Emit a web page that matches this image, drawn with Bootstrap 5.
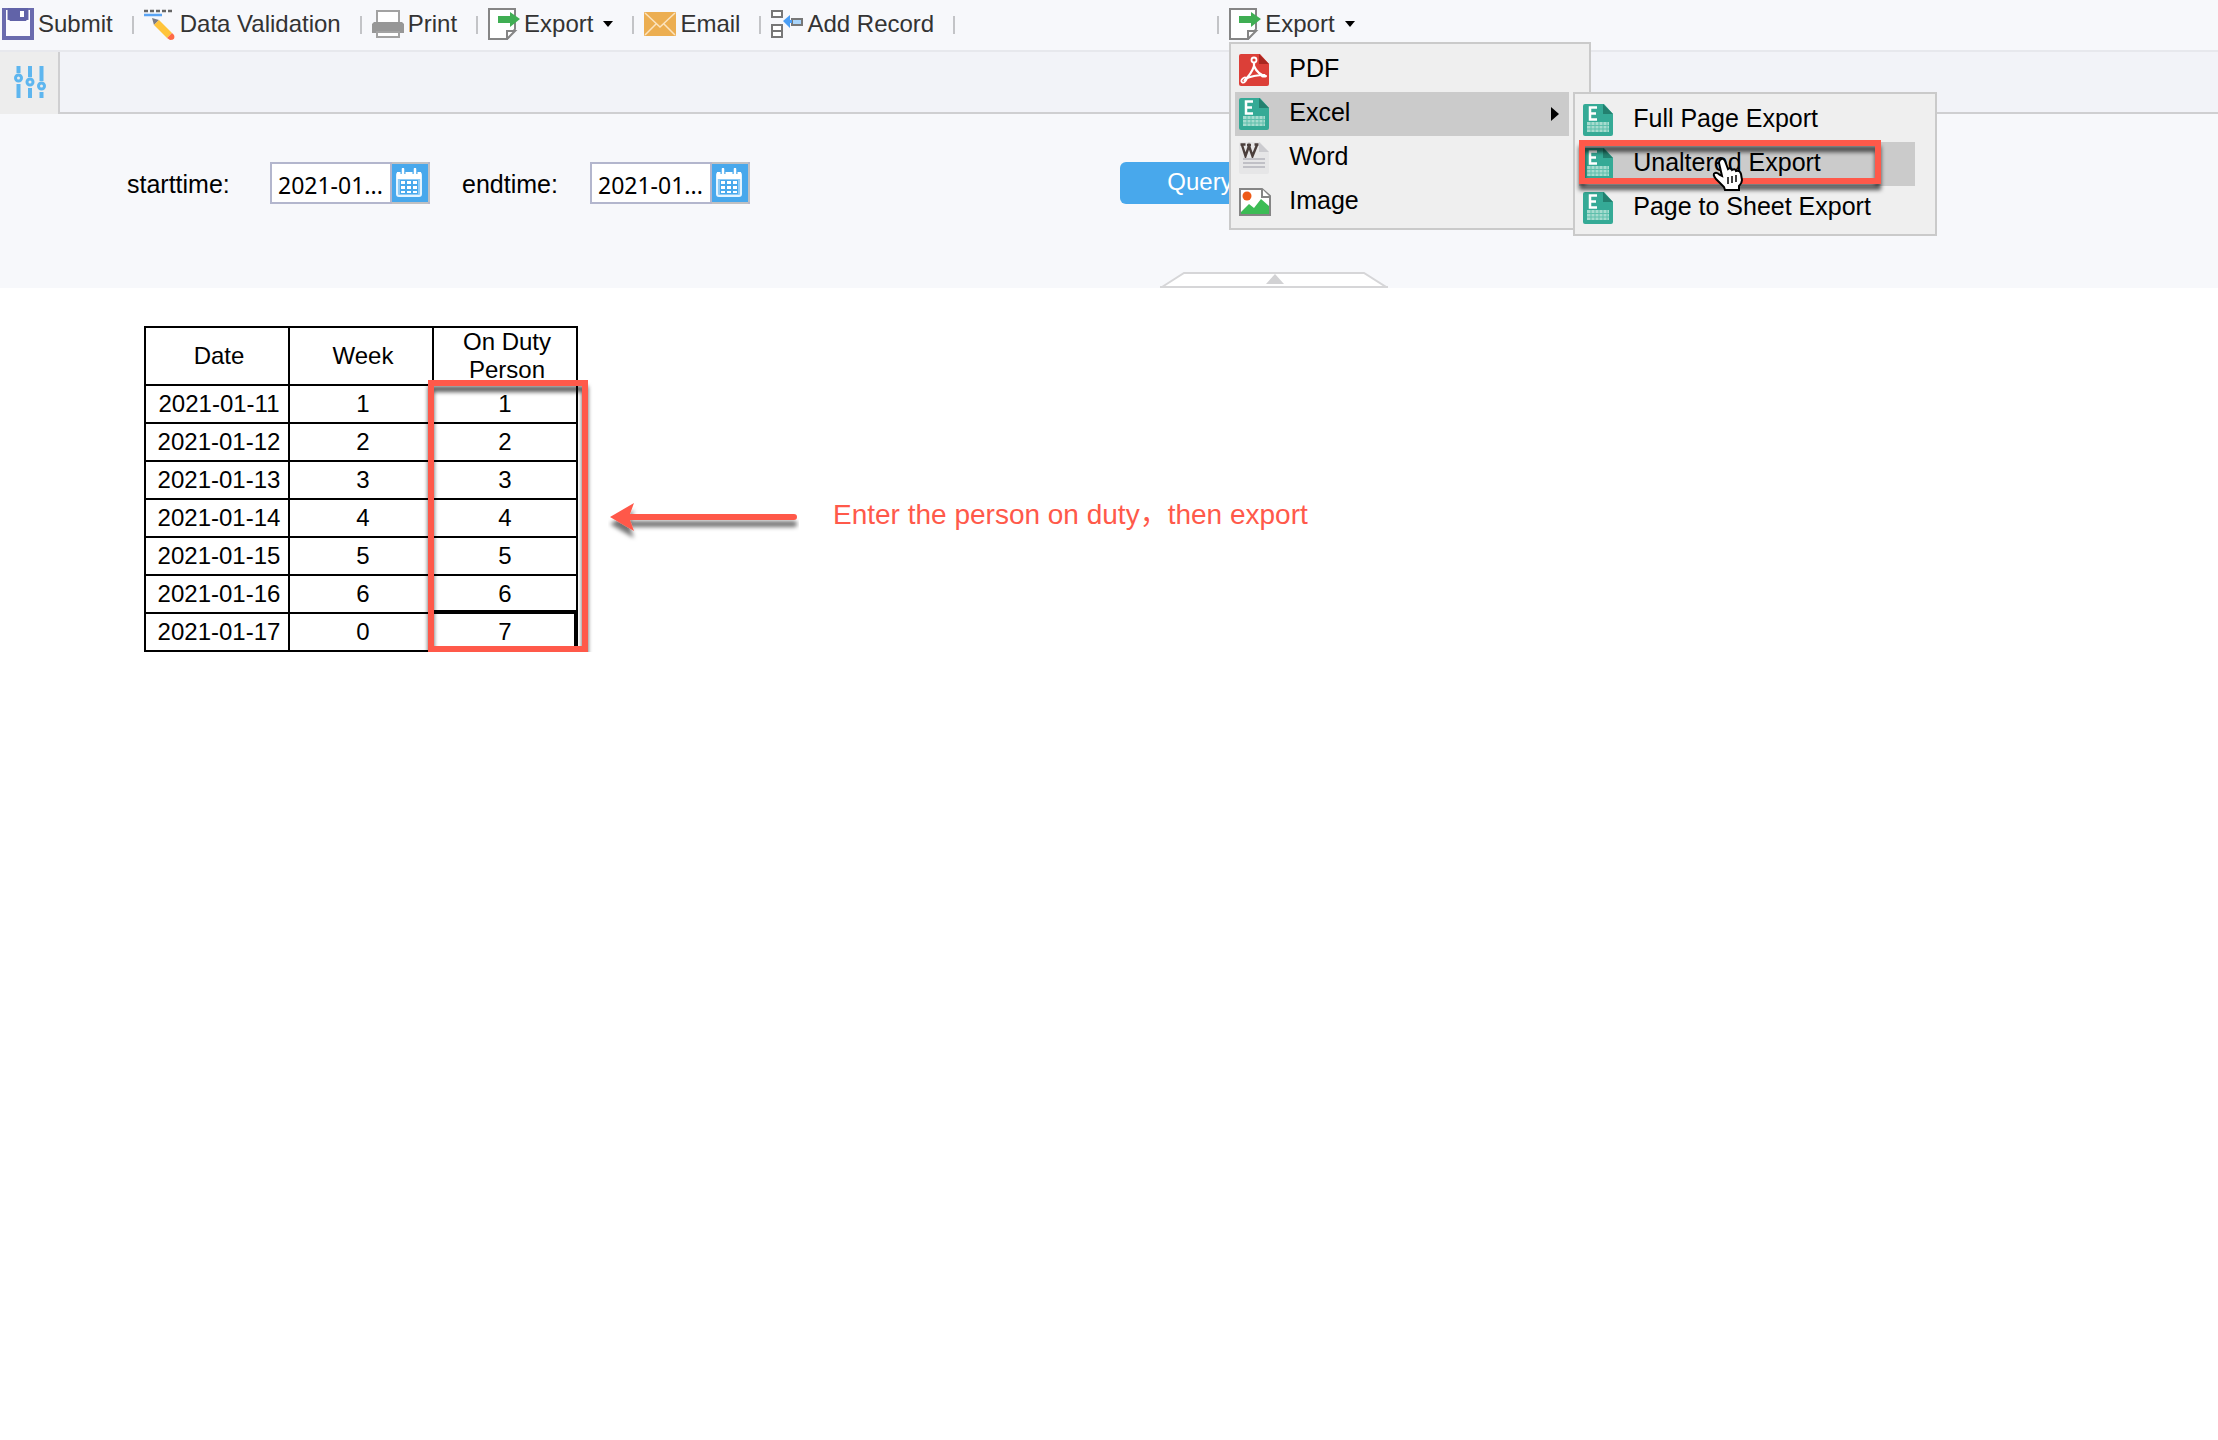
<!DOCTYPE html>
<html lang="en">
<head>
<meta charset="utf-8">
<meta name="viewport" content="width=device-width, initial-scale=1">
<title>Duty Report</title>
<link href="https://cdn.jsdelivr.net/npm/bootstrap@5.3.0/dist/css/bootstrap.min.css" rel="stylesheet">
<style>
  body { font-family: "Liberation Sans", Arial, sans-serif; font-size: 24px; line-height: 28px; color: #000; background: #fff; }
  svg { display: block; flex: none; }
  .toolbar { height: 52px; padding-left: 2px; background: #f7f8fb; border-bottom: 2px solid #e7e8ed; }
  .tool-btn { display: flex; align-items: center; gap: 4px; padding: 0; border: 0; background: none; color: #333; white-space: nowrap; height: 44px; margin-bottom: 2px; }
  .tool-sep { width: 2px; height: 18px; background: #c3c4c7; margin: 0 10px 0 19px; flex: none; }
  .tool-gap { width: 233px; flex: none; }
  .caret { border: 5px solid transparent; border-top: 6px solid #000; border-bottom: 0; margin-left: 6px; }
  .tab-strip { height: 62px; background: #f2f3f8; }
  .param-toggle { width: 60px; border: 0; border-right: 2px solid #cfcfd1; background: #ededed; padding: 14px 0 0 14px; display: flex; align-items: flex-start; }
  .tab-line { border-bottom: 2px solid #cfcfd1; }
  .param-panel { height: 174px; background: #f7f8fb; padding: 48px 0 0 127px; }
  .param-panel label { font-size: 25px; flex: none; padding-top: 2px; }
  .start-label { width: 143px; }
  .end-label { width: 128px; margin-left: 32px; }
  .date-box { width: 160px; height: 42px; border: 2px solid #b3b6cd; background: #fff; flex: none; }
  .date-box input { width: 120px; border: 0; padding: 4px 0 0 6px; font-family: "Noto Sans", sans-serif; font-size: 23px; line-height: 30px; color: #000; background: none; border-right: 2px solid #b3b6cd; outline: 0; }
  .date-box button { flex: 1; border: 0; padding: 0 0 0 3px; background: #48a8ec; box-shadow: 0 -2px #c0c0c2, 0 2px #c0c0c2, 2px 0 #c0c0c2; }
  .query-btn { width: 160px; height: 42px; margin-left: 370px; border: 0; border-radius: 6px; background: #48a8ec; color: #fff; padding: 0 0 2px; flex: none; }
  .collapse-tab { bottom: 0; left: 1160px; border: 0; padding: 0; background: none; }
  .drop-box { background: #efefef; border: 2px solid #cacaca; padding: 4px 20px 4px 4px; font-size: 25px; position: absolute; z-index: 5; }
  .export-menu { left: 0; top: 40px; width: 362px; }
  .sub-menu { left: 342px; top: 48px; width: 364px; }
  .drop-box button { display: flex; align-items: center; width: 100%; height: 44px; border: 0; padding: 0 10px 0 4px; background: none; white-space: nowrap; color: #000; }
  .drop-box .hot { background: #cbcbcb; }
  .drop-box button svg:first-child { width: 32px; height: 32px; }
  .drop-box button span { margin: 0 auto 4px 18px; }
  .red-frame { position: absolute; border: 6px solid #ff594a; filter: drop-shadow(0 6px 2px rgba(0,0,0,.65)); pointer-events: none; }
  .frame-menu { left: 4px; top: 46px; width: 302px; height: 44px; }
  .hand { position: absolute; left: 137px; top: 63px; }
  .report { padding: 38px 0 0 144px; }
  .duty-table { width: 434px; table-layout: fixed; border-collapse: collapse; text-align: center; }
  .duty-table th, .duty-table td { border: 2px solid #000; height: 38px; padding: 0 0 0 4px; font-weight: 400; }
  .duty-table td:last-child { padding-left: 0; }
  .duty-table th { height: 58px; }
  .active-cell::after { content: ""; position: absolute; right: 0; bottom: 0; width: 148px; height: 42px; border: 4px solid #000; }
  .frame-col { left: 284px; top: 54px; width: 160px; height: 272px; }
  .arrow { margin: 176px 34px 0 30px; }
  .note { margin-top: 173px; font-family: "Liberation Sans", "Noto Sans CJK SC", sans-serif; font-size: 28px; line-height: 32px; color: #ff594a; white-space: nowrap; }
</style>
<script src="https://cdn.jsdelivr.net/npm/bootstrap@5.3.0/dist/js/bootstrap.bundle.min.js"></script>
</head>
<body>
<svg width="0" height="0" class="position-absolute" aria-hidden="true">
  <defs>
    <symbol id="i-export" viewBox="0 0 32 32">
      <path d="M1 1h26v20l-8 10H1z" fill="#fff" stroke="#858585" stroke-width="2"/>
      <path d="M19 31v-8h8z" fill="#fff" stroke="#858585" stroke-width="2"/>
      <path d="M10 8h12V4l10 7-10 8v-4H10z" fill="#3fae53"/>
    </symbol>
    <symbol id="i-excel" viewBox="0 0 32 32">
      <path d="M0 2q0-2 2-2h19l9 10v20q0 2-2 2H2q-2 0-2-2z" fill="#35aa96"/>
      <path d="M20 0l10 10H20z" fill="#23806f"/>
      <path d="M14 3.500H7v12h7M7 9.500h6" fill="none" stroke="#fff" stroke-width="2.500"/>
      <path d="M4 18h22v10H4z" fill="#a6dccf"/>
      <path d="M4 21.500h22M4 25h22M8 18v10M12 18v10M16 18v10M20 18v10M24 18v10" stroke="#5fbfac"/>
    </symbol>
    <symbol id="i-cal" viewBox="0 0 28 30">
      <rect x="2" y="5" width="24" height="23" rx="2" fill="#8ecbf6" stroke="#e4f4ff" stroke-width="2"/>
      <path d="M2 4h24v7H2z" fill="#fff"/>
      <path d="M5 12h18v14H5z" fill="#48a8ec"/>
      <path d="M6 13h4v3H6zM12 13h4v3h-4zM18 13h4v3h-4zM6 18h4v3H6zM12 18h4v3h-4zM18 18h4v3h-4zM6 23h4v2H6zM12 23h4v2h-4zM18 23h4v2h-4z" fill="#fff"/>
      <path d="M8 1v5M20 1v5" stroke="#48a8ec" stroke-width="5"/>
      <path d="M8 1v5M20 1v5" stroke="#fff" stroke-width="2.500" stroke-linecap="round"/>
    </symbol>
  </defs>
</svg>

<header class="toolbar d-flex align-items-center">
  <button class="tool-btn" type="button">
    <svg width="32" height="32" viewBox="0 0 32 32"><path d="M0 0h32v32H0z" fill="#6a6bae"/><path d="M4 12h24v16H4z" fill="#fbfbff"/><path d="M4 2h1.500v12H4zM26.500 2H28v12h-1.500z" fill="#fff"/><path d="M6 0h20v10l-2 3H8l-2-3z" fill="#6163a8"/><path d="M18 3h4v6h-4z" fill="#fff"/></svg>
    <span>Submit</span></button>
  <span class="tool-sep"></span>
  <button class="tool-btn" type="button">
    <svg width="32" height="32" viewBox="0 0 32 32"><path d="M0 3h29" stroke="#666" stroke-width="2.500" stroke-dasharray="4 2"/><path d="M0 7h18" stroke="#5ba5f5" stroke-width="2.500"/><path d="M8 10l7 2-5 5z" fill="#7c7c84"/><path d="M10 17l5-5 13 13-5 5z" fill="#ffc43b"/><path d="M23 30l5-5 2 2q2 5-4 5z" fill="#ff6a45"/></svg>
    <span>Data Validation</span></button>
  <span class="tool-sep"></span>
  <button class="tool-btn" type="button">
    <svg width="32" height="32" viewBox="0 0 32 32"><path d="M5 3h22v12H5z" fill="#fff" stroke="#a2a2a2" stroke-width="2"/><path d="M2 14h28l2 2v9H0v-9z" fill="#979797"/><path d="M5 24h22v5H5z" fill="#fff" stroke="#a2a2a2" stroke-width="2"/></svg>
    <span>Print</span></button>
  <span class="tool-sep"></span>
  <button class="tool-btn" type="button"><svg width="32" height="32"><use href="#i-export"/></svg><span>Export</span><i class="caret"></i></button>
  <span class="tool-sep"></span>
  <button class="tool-btn" type="button">
    <svg width="32" height="32" viewBox="0 0 32 32"><rect y="4" width="32" height="24" rx="1" fill="#ecae51"/><path d="M1 5l15 14L31 5M1 27l11-11M31 27L20 16" fill="none" stroke="#fbe3bf" stroke-width="1.500"/></svg>
    <span>Email</span></button>
  <span class="tool-sep"></span>
  <button class="tool-btn" type="button">
    <svg width="32" height="32" viewBox="0 0 32 32"><path d="M1 3h10v6H1zM1 17h10v12H1zM1 23h10" fill="#fff" stroke="#777" stroke-width="2"/><path d="M21 11h10v6H21z" fill="#a9d5fb" stroke="#777" stroke-width="2"/><path d="M12 13l7-6v5h2v3h-2v5z" fill="#4a9ef5"/></svg>
    <span>Add Record</span></button>
  <span class="tool-sep"></span>
  <span class="tool-gap"></span>
  <span class="tool-sep"></span>
  <div class="position-relative">
    <button class="tool-btn" type="button" aria-expanded="true"><svg width="32" height="32"><use href="#i-export"/></svg><span>Export</span><i class="caret"></i></button>
    <div class="drop-box export-menu">
      <button type="button"><svg viewBox="0 0 32 32"><path d="M0 2q0-2 2-2h19l9 10v20q0 2-2 2H2q-2 0-2-2z" fill="#dc3f38"/><path d="M20 0l10 10H20z" fill="#a92720"/><path d="M15 8v4Q13 19 5 27M15 12q4 9 12 10M6 25q8-4 20-4" fill="none" stroke="#fff" stroke-width="2.200"/><circle cx="15" cy="6" r="2.500" fill="none" stroke="#fff" stroke-width="1.800"/><ellipse cx="5" cy="26" rx="3" ry="2" transform="rotate(-45 5 26)" fill="none" stroke="#fff" stroke-width="1.600"/><ellipse cx="25" cy="22" rx="3" ry="1.600" fill="#fff"/></svg><span>PDF</span></button>
      <button type="button" class="hot"><svg><use href="#i-excel"/></svg><span>Excel</span><svg width="8" height="14"><path d="M0 0l8 7-8 7z"/></svg></button>
      <button type="button"><svg viewBox="0 0 32 32"><path d="M0 2q0-2 2-2h19l9 10v20q0 2-2 2H2q-2 0-2-2z" fill="#e6e6e7"/><path d="M20 0l10 10H20z" fill="#cbcbcf"/><path d="M3 3l3.500 11L10 4l3.500 10L18 3M1.500 2.500h5M8 3h4M15.500 2.500h4" fill="none" stroke="#4b3f3c" stroke-width="2.400"/><path d="M4 17h22M4 21h22M4 25h22" stroke="#c0c0c6" stroke-width="2"/></svg><span>Word</span></button>
      <button type="button"><svg viewBox="0 0 32 32"><path d="M1 3h22l8 7v19H1z" fill="#fff" stroke="#858585" stroke-width="2"/><path d="M23 3v8h8" fill="#fff" stroke="#858585" stroke-width="2"/><circle cx="8" cy="10" r="4.500" fill="#ee5a17"/><path d="M2 26l8-8 5 4 7-9 8 7v8H2z" fill="#3cbc55"/></svg><span>Image</span></button>
      <div class="drop-box sub-menu">
        <button type="button"><svg><use href="#i-excel"/></svg><span>Full Page Export</span></button>
        <button type="button" class="hot"><svg><use href="#i-excel"/></svg><span>Unaltered Export</span></button>
        <button type="button"><svg><use href="#i-excel"/></svg><span>Page to Sheet Export</span></button>
        <div class="red-frame frame-menu"></div>
        <svg class="hand" width="32" height="36" viewBox="0 0 32 36"><path d="M8 3q3-3 5 1l3 8q2-2 4 1 3-2 4 1 4-1 5 3l1 6q0 3-3 6v4H13l-1-3-8-8q-4-5-1-6 2-1 5 2l2 1L7 6q0-2 1-3z" fill="#fff" stroke="#000" stroke-width="2"/><path d="M16 20v7M20 19v7M24 18v7" stroke="#000" stroke-width="1.500"/></svg>
      </div>
    </div>
  </div>
</header>

<div class="tab-strip d-flex">
  <button class="param-toggle" type="button" aria-label="Parameters">
    <svg width="32" height="32" viewBox="0 0 32 32"><path d="M4.500 0v7M4.500 18v14M16 0v11M16 22v10M27.500 0v15M27.500 26v6" stroke="#5eb6ef" stroke-width="4"/><g fill="none" stroke="#5eb6ef" stroke-width="3"><circle cx="4.500" cy="12" r="3"/><circle cx="16" cy="16" r="3"/><circle cx="27.500" cy="20" r="3"/></g></svg>
  </button>
  <div class="tab-line flex-grow-1"></div>
</div>

<form class="param-panel d-flex align-items-start position-relative">
  <div class="d-flex align-items-center">
    <label class="start-label" for="st">starttime:</label>
    <div class="date-box d-flex"><input id="st" type="text" value="2021-01..."><button type="button" aria-label="Pick start date"><svg width="28" height="30"><use href="#i-cal"/></svg></button></div>
    <label class="end-label" for="et">endtime:</label>
    <div class="date-box d-flex"><input id="et" type="text" value="2021-01..."><button type="button" aria-label="Pick end date"><svg width="28" height="30"><use href="#i-cal"/></svg></button></div>
    <button class="query-btn" type="button">Query</button>
  </div>
  <button class="collapse-tab position-absolute" type="button" aria-label="Collapse parameters">
    <svg width="228" height="16" viewBox="0 0 228 16"><path d="M2 15L24 1h180l22 14z" fill="#fff" stroke="#d6d6d8" stroke-width="2"/><path d="M0 15h228" stroke="#d6d6d8" stroke-width="2"/><path d="M115 2l9 10h-18z" fill="#d2d2d4"/></svg>
  </button>
</form>

<main class="report d-flex align-items-start">
  <div class="position-relative">
    <table class="duty-table">
      <thead><tr><th>Date</th><th>Week</th><th>On Duty Person</th></tr></thead>
      <tbody>
        <tr><td>2021-01-11</td><td>1</td><td>1</td></tr>
        <tr><td>2021-01-12</td><td>2</td><td>2</td></tr>
        <tr><td>2021-01-13</td><td>3</td><td>3</td></tr>
        <tr><td>2021-01-14</td><td>4</td><td>4</td></tr>
        <tr><td>2021-01-15</td><td>5</td><td>5</td></tr>
        <tr><td>2021-01-16</td><td>6</td><td>6</td></tr>
        <tr><td>2021-01-17</td><td>0</td><td class="active-cell">7</td></tr>
      </tbody>
    </table>
    <div class="red-frame frame-col"></div>
  </div>
  <svg class="arrow" width="191" height="42" viewBox="0 0 191 42"><defs><filter id="sh" x="-10%" y="-20%" width="120%" height="170%"><feDropShadow dx="0" dy="7" stdDeviation="2" flood-opacity=".55"/></filter></defs><path d="M2 15L26 1l-4 11h164q3 0 3 3t-3 3H22l4 11z" fill="#ff594a" filter="url(#sh)"/></svg>
  <div class="note">Enter the person on duty，then export</div>
</main>
</body>
</html>
